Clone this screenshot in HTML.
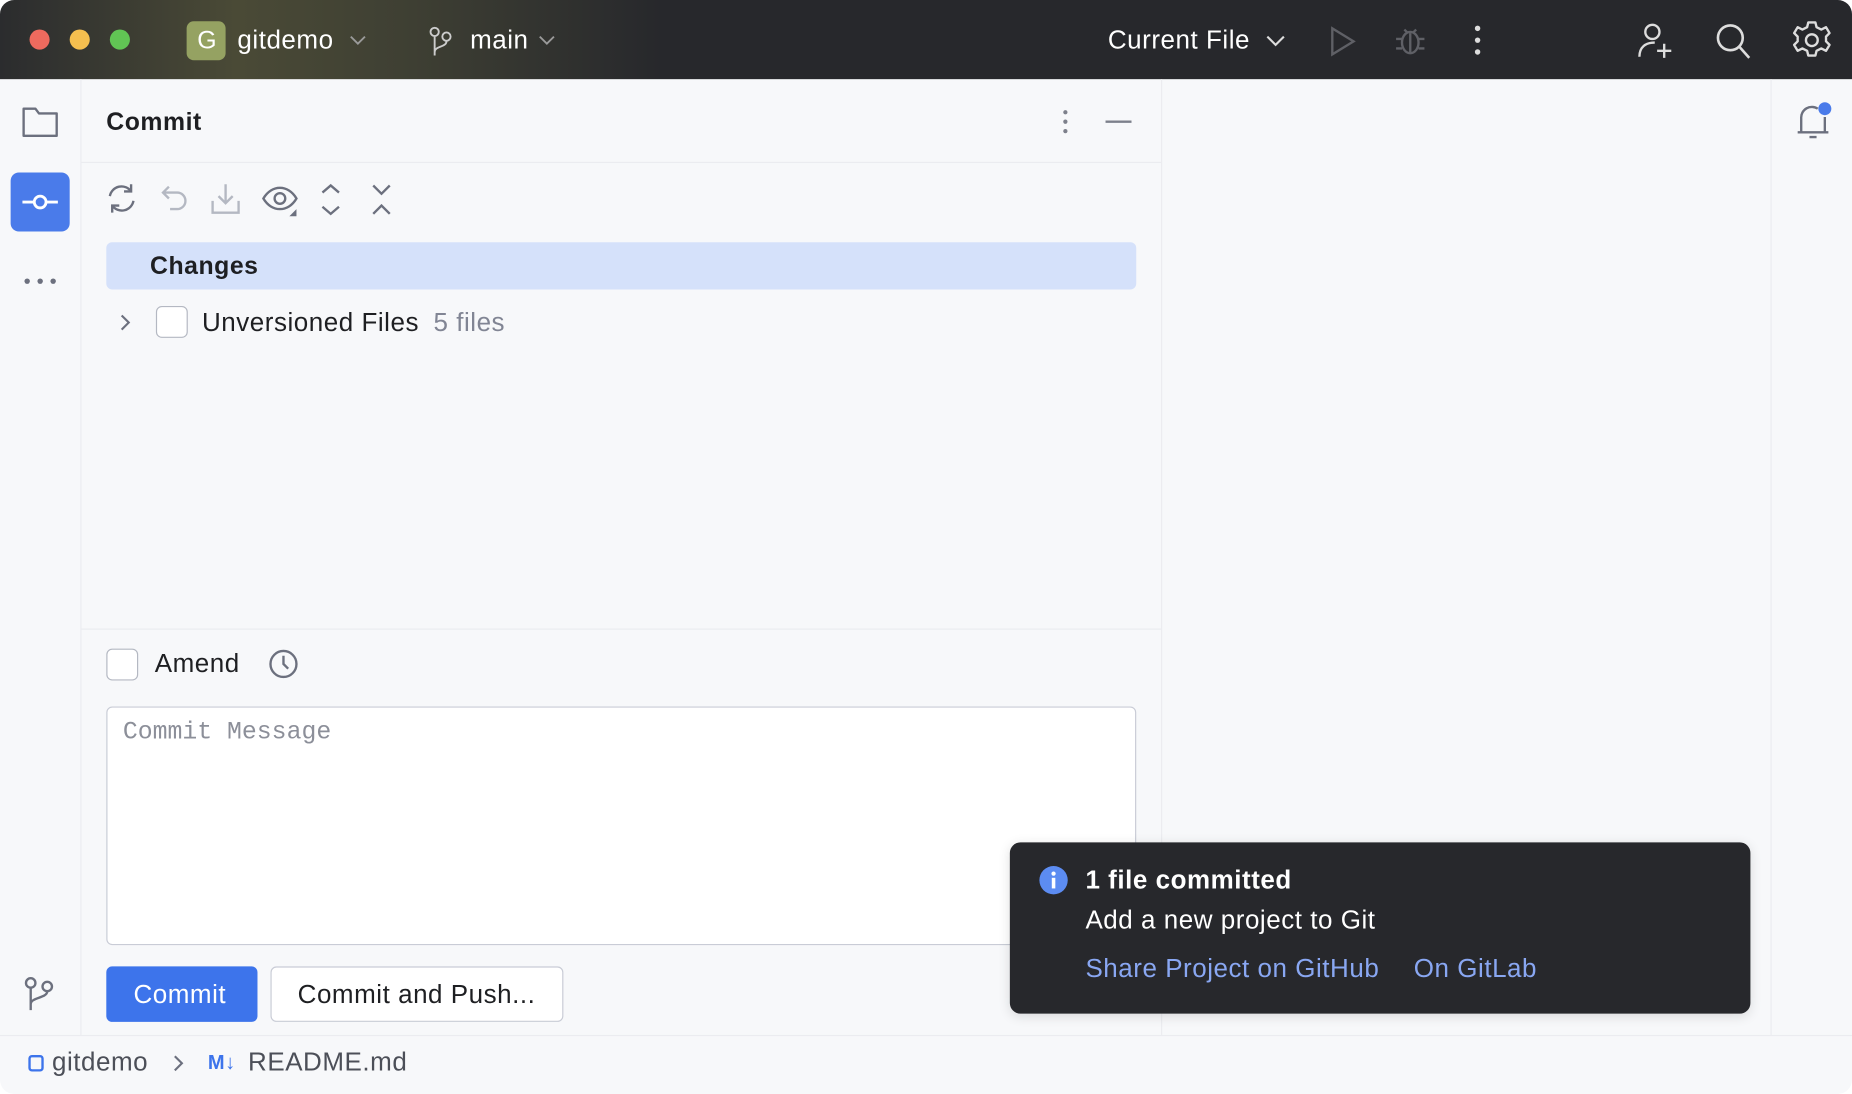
<!DOCTYPE html>
<html><head><meta charset="utf-8"><style>
*{box-sizing:border-box;margin:0;padding:0}
html,body{width:1852px;height:1094px;overflow:hidden;background:#fff}
#w{position:absolute;left:0;top:0;width:1568px;height:926px;transform:scale(1.18112,1.18143);transform-origin:0 0;background:#f7f8fa;border-radius:12px;overflow:hidden;font-family:"Liberation Sans",sans-serif;color:#1e1f22}
.a{position:absolute}
.t{position:absolute;white-space:nowrap;line-height:1;letter-spacing:0.45px}
#title{left:0;top:0;width:1568px;height:67px;background:linear-gradient(90deg,#2b2c2e 0,#4a4a36 200px,#3e3f33 350px,#27282c 560px,#27282c 100%)}
.dot{position:absolute;width:17px;height:17px;border-radius:50%;top:25px}
svg{position:absolute;overflow:visible}
</style></head><body><div id="w">
<div id="title" class="a"></div>
<div class="dot" style="left:25px;background:#ed6a5e"></div>
<div class="dot" style="left:59px;background:#f5bf4f"></div>
<div class="dot" style="left:93px;background:#61c554"></div>
<div class="a" style="left:158px;top:18px;width:33px;height:33px;border-radius:6px;background:#95a262"></div>
<div class="t" style="left:167px;top:24px;font-size:21px;color:#fff">G</div>
<div class="t" style="left:201px;top:23px;font-size:22px;color:#fff">gitdemo</div>
<svg style="left:296px;top:30px" width="14" height="9"><path d="M1 1l6 6 6-6" fill="none" stroke="#9a9a9a" stroke-width="1.6"/></svg>
<svg style="left:363px;top:22px" width="22" height="26"><circle cx="5" cy="5" r="3.5" fill="none" stroke="#ccc" stroke-width="1.6"/><circle cx="15" cy="9" r="3.5" fill="none" stroke="#ccc" stroke-width="1.6"/><path d="M5 9v16M15 13c0 5-10 4-10 9" fill="none" stroke="#ccc" stroke-width="1.6"/></svg>
<div class="t" style="left:398px;top:23px;font-size:22px;color:#fff">main</div>
<svg style="left:456px;top:30px" width="14" height="9"><path d="M1 1l6 6 6-6" fill="none" stroke="#9a9a9a" stroke-width="1.6"/></svg>
<div class="t" style="left:938px;top:23px;font-size:22px;color:#fff">Current File</div>
<svg style="left:1072px;top:30px" width="16" height="10"><path d="M1 1l7 7 7-7" fill="none" stroke="#ddd" stroke-width="1.8"/></svg>
<svg style="left:1126px;top:22px" width="22" height="26"><path d="M2 2v22l18-11z" fill="none" stroke="#5f6066" stroke-width="2"/></svg>
<svg style="left:1180px;top:20px" width="28" height="28"><ellipse cx="14" cy="16" rx="7" ry="9" fill="none" stroke="#5f6066" stroke-width="2"/><path d="M9 5l3 3M19 5l-3 3M2 13h5M21 13h5M2 21h5M21 21h5M14 8v17" stroke="#5f6066" stroke-width="2"/></svg>
<svg style="left:1247px;top:21px" width="8" height="26"><circle cx="4" cy="3" r="2.3" fill="#ddd"/><circle cx="4" cy="13" r="2.3" fill="#ddd"/><circle cx="4" cy="23" r="2.3" fill="#ddd"/></svg>
<svg style="left:1385px;top:18px" width="32" height="34"><circle cx="14" cy="9" r="6" fill="none" stroke="#ddd" stroke-width="2"/><path d="M3 30c0-8 5-12 13-12M18 25h12M24 19v12" fill="none" stroke="#ddd" stroke-width="2"/></svg>
<svg style="left:1452px;top:19px" width="32" height="32"><circle cx="13" cy="13" r="10.5" fill="none" stroke="#ddd" stroke-width="2.2"/><path d="M21 21l8 9" stroke="#ddd" stroke-width="2.2"/></svg>
<svg style="left:1518px;top:18px" width="32" height="32"><path d="M13 1h6l1 4 4 2 4-2 3 5-3 3v4l3 3-3 5-4-2-4 2-1 4h-6l-1-4-4-2-4 2-3-5 3-3v-4l-3-3 3-5 4 2 4-2z" fill="none" stroke="#ddd" stroke-width="2" stroke-linejoin="round"/><circle cx="16" cy="16" r="5" fill="none" stroke="#ddd" stroke-width="2"/></svg>

<div class="a" style="left:68px;top:67px;width:1px;height:809px;background:#ebecf0"></div>
<div class="a" style="left:983px;top:67px;width:1px;height:809px;background:#ebecf0"></div>
<div class="a" style="left:1499px;top:67px;width:1px;height:809px;background:#ebecf0"></div>
<div class="a" style="left:0;top:876px;width:1568px;height:1px;background:#ebecf0"></div>
<div class="a" style="left:69px;top:137px;width:914px;height:1px;background:#ebecf0"></div>
<div class="a" style="left:69px;top:532px;width:914px;height:1px;background:#ebecf0"></div>

<svg style="left:18px;top:89px" width="32" height="28"><path d="M2 3h10l3 4h15v19H2z" fill="none" stroke="#6c707e" stroke-width="2" stroke-linejoin="round"/></svg>
<div class="a" style="left:9px;top:146px;width:50px;height:50px;border-radius:7px;background:#4a7bea"></div>
<svg style="left:18px;top:162px" width="32" height="18"><circle cx="16" cy="9" r="5" fill="none" stroke="#fff" stroke-width="2.4"/><path d="M1 9h10M21 9h10" stroke="#fff" stroke-width="2.4"/></svg>
<svg style="left:20px;top:235px" width="30" height="6"><circle cx="3" cy="3" r="2.3" fill="#6c707e"/><circle cx="14" cy="3" r="2.3" fill="#6c707e"/><circle cx="25" cy="3" r="2.3" fill="#6c707e"/></svg>
<svg style="left:20px;top:826px" width="28" height="30"><circle cx="6" cy="6" r="4" fill="none" stroke="#6c707e" stroke-width="2"/><circle cx="20" cy="9" r="4" fill="none" stroke="#6c707e" stroke-width="2"/><path d="M6 10v19M20 13c0 6-14 5-14 11" fill="none" stroke="#6c707e" stroke-width="2"/></svg>

<div class="t" style="left:90px;top:93px;font-size:21px;font-weight:bold">Commit</div>
<svg style="left:899px;top:92px" width="6" height="22"><circle cx="3" cy="3" r="1.8" fill="#7d808b"/><circle cx="3" cy="11" r="1.8" fill="#7d808b"/><circle cx="3" cy="19" r="1.8" fill="#7d808b"/></svg>
<div class="a" style="left:936px;top:102px;width:22px;height:2px;background:#7d808b"></div>

<svg style="left:89px;top:154px" width="28" height="28"><path d="M4 12a10 10 0 0 1 18-4M24 16a10 10 0 0 1-18 4" fill="none" stroke="#6c707e" stroke-width="2"/><path d="M22 2v6h-6M6 26v-6h6" fill="none" stroke="#6c707e" stroke-width="2"/></svg>
<svg style="left:136px;top:155px" width="24" height="26"><path d="M7 3L2 8l5 5M2 8h12a7 7 0 0 1 0 14H8" fill="none" stroke="#b4b8c2" stroke-width="2"/></svg>
<svg style="left:178px;top:154px" width="26" height="28"><path d="M13 2v16M7 12l6 6 6-6M2 16v10h22V16" fill="none" stroke="#b4b8c2" stroke-width="2"/></svg>
<svg style="left:221px;top:156px" width="32" height="28"><path d="M2 12c7-12 21-12 28 0-7 12-21 12-28 0z" fill="none" stroke="#6c707e" stroke-width="2"/><circle cx="16" cy="12" r="4.5" fill="none" stroke="#6c707e" stroke-width="2"/><path d="M30 21v6h-6z" fill="#6c707e"/></svg>
<svg style="left:271px;top:155px" width="18" height="28"><path d="M2 8l7-6 7 6M2 20l7 6 7-6" fill="none" stroke="#6c707e" stroke-width="2"/></svg>
<svg style="left:314px;top:155px" width="18" height="28"><path d="M2 2l7 7 7-7M2 26l7-7 7 7" fill="none" stroke="#6c707e" stroke-width="2"/></svg>

<div class="a" style="left:90px;top:205px;width:872px;height:40px;border-radius:5px;background:#d5e1fa"></div>
<div class="t" style="left:127px;top:215px;font-size:21px;font-weight:bold">Changes</div>
<svg style="left:101px;top:265px" width="10" height="16"><path d="M2 2l6 6-6 6" fill="none" stroke="#6c707e" stroke-width="1.8"/></svg>
<div class="a" style="left:132px;top:259px;width:27px;height:27px;border-radius:5px;background:#fff;border:1.5px solid #b4b8c2"></div>
<div class="t" style="left:171px;top:262px;font-size:22px">Unversioned Files</div>
<div class="t" style="left:367px;top:262px;font-size:22px;color:#818594">5 files</div>

<div class="a" style="left:90px;top:549px;width:27px;height:27px;border-radius:5px;background:#fff;border:1.5px solid #b4b8c2"></div>
<div class="t" style="left:131px;top:551px;font-size:22px">Amend</div>
<svg style="left:227px;top:549px" width="26" height="26"><circle cx="13" cy="13" r="11" fill="none" stroke="#6c707e" stroke-width="2"/><path d="M13 6v7l4 4" fill="none" stroke="#6c707e" stroke-width="2"/></svg>

<div class="a" style="left:90px;top:598px;width:872px;height:202px;border-radius:5px;background:#fff;border:1.5px solid #c9ccd6"></div>
<div class="t" style="left:104px;top:610px;font-size:21px;color:#8c8f99;font-family:'Liberation Mono',monospace;letter-spacing:0">Commit Message</div>

<div class="a" style="left:90px;top:818px;width:128px;height:47px;border-radius:5px;background:#3d74eb"></div>
<div class="t" style="left:113px;top:831px;font-size:22px;color:#fff">Commit</div>
<div class="a" style="left:229px;top:818px;width:248px;height:47px;border-radius:5px;background:#fff;border:1.5px solid #c9ccd6"></div>
<div class="t" style="left:252px;top:831px;font-size:22px">Commit and Push...</div>

<svg style="left:1519px;top:85px" width="34" height="36"><path d="M6 26V15a9 9 0 0 1 14-8M26 14v12M3 27h26M13 31h6" fill="none" stroke="#6c707e" stroke-width="2"/><circle cx="26" cy="7" r="5.5" fill="#4a7bea"/></svg>

<div class="a" style="left:24px;top:893px;width:13px;height:14px;border-radius:3px;border:2px solid #3d74eb"></div>
<div class="t" style="left:44px;top:888px;font-size:22px;color:#4c4f58">gitdemo</div>
<svg style="left:146px;top:892px" width="10" height="16"><path d="M2 2l6 6-6 6" fill="none" stroke="#6c707e" stroke-width="1.8"/></svg>
<div class="t" style="left:176px;top:891px;font-size:17px;color:#3d74eb;font-weight:bold">M↓</div>
<div class="t" style="left:210px;top:888px;font-size:22px;color:#4c4f58">README.md</div>

<div class="a" style="left:855px;top:713px;width:627px;height:145px;border-radius:9px;background:#27282c;box-shadow:0 2px 10px rgba(0,0,0,.12)"></div>
<svg style="left:880px;top:733px" width="24" height="24"><circle cx="12" cy="12" r="12" fill="#5c8cf2"/><rect x="10.5" y="10" width="3" height="9" fill="#fff"/><circle cx="12" cy="6.5" r="1.8" fill="#fff"/></svg>
<div class="t" style="left:919px;top:734px;font-size:22px;font-weight:bold;color:#fff">1 file committed</div>
<div class="t" style="left:919px;top:768px;font-size:22px;color:#fff">Add a new project to Git</div>
<div class="t" style="left:919px;top:809px;font-size:22px;color:#89a7f2">Share Project on GitHub</div>
<div class="t" style="left:1197px;top:809px;font-size:22px;color:#89a7f2">On GitLab</div>
</div></body></html>
